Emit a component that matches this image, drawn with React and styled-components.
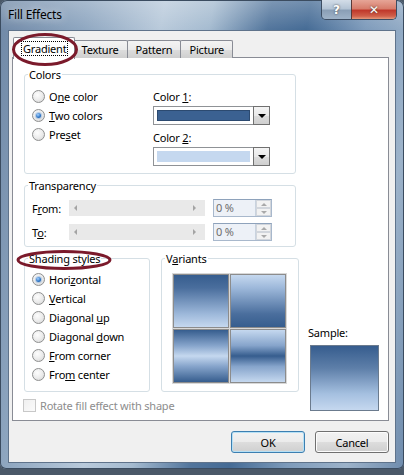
import React from "react";
import styled, { createGlobalStyle, css } from "styled-components";

const FONT = `"Noto Sans", "Open Sans", sans-serif`;
const DARK = "#365d8e";
const LIGHT = "#c5d8ef";

const Global = createGlobalStyle`
  html, body { margin: 0; padding: 0; }
  body {
    width: 404px; height: 475px; overflow: hidden;
    background: #4a5868;
    font-family: ${FONT};
    font-size: 11px;
    letter-spacing: -0.2px;
    color: #000;
  }
  * { box-sizing: border-box; }
`;

const Frame = styled.div`
  position: relative;
  width: 404px;
  height: 469px;
  padding: 0 8px 6px 8px;
  display: flex;
  flex-direction: column;
  border-radius: 7px 7px 6px 6px;
  background:
    linear-gradient(180deg, rgba(255,255,255,0.25) 0px, rgba(255,255,255,0) 30px),
    linear-gradient(100deg, #6f88a6 0%, #8ea6c0 18%, #b9cadb 34%, #a5bbd0 44%, #52759c 56%, #456b95 64%, #7e9bbb 76%, #9db3ca 88%, #6f8cad 100%);
  box-shadow: inset 0 0 0 1px #3b4c60;
`;

const TitleBar = styled.div`
  height: 30px;
  display: flex;
  align-items: flex-start;
  justify-content: space-between;
`;

const Title = styled.div`
  font-size: 12px;
  line-height: 30px;
  color: #000;
  text-shadow: 0 0 8px rgba(255,255,255,0.9);
`;

const Controls = styled.div`
  display: flex;
  margin-right: -1px;
  border: 1px solid #3c4d62;
  border-top: none;
  border-radius: 0 0 5px 5px;
  overflow: hidden;
`;

const CtrlBtn = styled.div`
  height: 19px;
  width: ${(p) => p.$w}px;
  display: flex;
  align-items: center;
  justify-content: center;
  color: #fff;
  font-weight: bold;
  font-size: 12px;
  font-family: "DejaVu Sans", sans-serif;
  text-shadow: 0 0 2px #333;
  ${(p) =>
    p.$close
      ? css`
          background: linear-gradient(180deg, #e6a597 0%, #d77d6c 45%, #c0392b 55%, #d0604a 85%, #e59a7c 100%);
          border-left: 1px solid #5a3a38;
        `
      : css`
          background: linear-gradient(180deg, #d3dde8 0%, #b4c4d5 45%, #8a9fb6 55%, #9fb3c8 100%);
        `}
`;

const Client = styled.div`
  position: relative;
  flex: 1;
  background: #f0f0f0;
  border: 1px solid #5f738b;
  display: flex;
  flex-direction: column;
`;

const TabStrip = styled.div`
  display: flex;
  align-items: flex-end;
  padding-left: 6px;
  margin-top: 6px;
  height: 21px;
  position: relative;
  z-index: 2;
`;

const Tab = styled.div`
  height: 18px;
  padding: 0 8px;
  display: flex;
  align-items: center;
  border: 1px solid #898c95;
  border-bottom: none;
  border-radius: 2px 2px 0 0;
  margin-left: -1px;
  background: linear-gradient(180deg, #f3f3f3 0%, #ebebeb 50%, #dddddd 51%, #cfcfcf 100%);
  ${(p) =>
    p.$active &&
    css`
      height: 22px;
      margin: 0 -2px -1px -2px;
      padding: 0 7px 1px 8px;
      background: #fff;
      position: relative;
      z-index: 3;
    `}
`;

const Focus = styled.span`
  outline: 1px dotted #000;
  outline-offset: 0;
  padding: 0 1px;
  line-height: 13px;
`;

const Panel = styled.div`
  margin: -1px 6px 0 3px;
  height: 364px;
  background: #fff;
  border: 1px solid #898c95;
  padding: 16px 0 0 11px;
  display: flex;
  flex-direction: column;
`;

const Group = styled.div`
  position: relative;
  width: ${(p) => p.$w}px;
  height: ${(p) => p.$h}px;
  border: 1px solid #d5dfe5;
  border-radius: 3px;
  margin-top: ${(p) => p.$mt || 0}px;
  flex-shrink: 0;
`;

const Legend = styled.div`
  position: absolute;
  top: -8px;
  left: 3px;
  padding: 0 1px;
  background: #fff;
  line-height: 15px;
`;

const Acc = styled.span`
  text-decoration: underline;
  text-underline-offset: 1px;
`;

const ColorsBody = styled.div`
  display: flex;
  padding: 12px 0 0 7px;
`;

const RadioCol = styled.div`
  width: 121px;
  display: flex;
  flex-direction: column;
`;

const RadioRow = styled.div`
  height: 19px;
  display: flex;
  align-items: center;
  gap: 4px;
`;

const RadioDot = styled.span`
  width: 13px;
  height: 13px;
  border-radius: 50%;
  border: 1px solid #8e8f8f;
  background: radial-gradient(circle at 40% 35%, #fdfdfd 0%, #ececec 50%, #d2d2d2 100%);
  display: flex;
  align-items: center;
  justify-content: center;
  flex-shrink: 0;
  &::after {
    content: "";
    display: ${(p) => (p.$on ? "block" : "none")};
    width: 5px;
    height: 5px;
    border-radius: 50%;
    background: radial-gradient(circle at 40% 35%, #a6d2ff 0%, #2a72c4 60%, #1b4f8e 100%);
    box-shadow: 0 0 1px 1px rgba(60, 120, 190, 0.35);
  }
`;

const ColorCol = styled.div`
  display: flex;
  flex-direction: column;
`;

const Label = styled.div`
  line-height: 19px;
  height: 19px;
  margin-top: ${(p) => p.$mt || 0}px;
`;

const Dropdown = styled.div`
  width: 117px;
  height: 19px;
  display: flex;
  align-items: stretch;
`;

const SwatchBox = styled.div`
  flex: 1;
  border: 1px solid #8f9296;
  border-right: none;
  background: #fff;
  padding: 3px;
  display: flex;
`;

const Swatch = styled.div`
  flex: 1;
  background: ${(p) => p.$c};
  border: 1px solid ${(p) => p.$b};
`;

const DropBtn = styled.div`
  width: 17px;
  border: 1px solid #707070;
  background: linear-gradient(180deg, #f4f4f4 0%, #e9e9e9 50%, #dcdcdc 51%, #cfcfcf 100%);
  display: flex;
  align-items: center;
  justify-content: center;
  &::after {
    content: "";
    border-left: 4px solid transparent;
    border-right: 4px solid transparent;
    border-top: 4px solid #000;
  }
`;

const TransBody = styled.div`
  display: flex;
  flex-direction: column;
  gap: 6px;
  padding: 13px 0 0 7px;
`;

const TransRow = styled.div`
  display: flex;
  align-items: center;
  height: 18px;
`;

const TransLabel = styled.div`
  width: 37px;
`;

const Slider = styled.div`
  width: 136px;
  height: 16px;
  background: #e9e9e9;
  display: flex;
  align-items: center;
  justify-content: space-between;
  padding: 0 9px 0 5px;
`;

const Tri = styled.span`
  width: 0;
  height: 0;
  border-top: 3px solid transparent;
  border-bottom: 3px solid transparent;
  ${(p) =>
    p.$dir === "left"
      ? css`border-right: 3px solid #a4a4a4;`
      : css`border-left: 3px solid #a4a4a4;`}
`;

const Spinner = styled.div`
  margin-left: 8px;
  width: 59px;
  height: 18px;
  display: flex;
  border: 1px solid #a8b8cc;
  border-top-color: #8ea2bb;
  background: #edf1f7;
`;

const SpinText = styled.div`
  flex: 1;
  color: #6d6d6d;
  line-height: 16px;
  padding-left: 2px;
`;

const SpinBtns = styled.div`
  width: 16px;
  display: flex;
  flex-direction: column;
  border-left: 1px solid #c9d3df;
  background: #f2f2f2;
`;

const SpinBtn = styled.div`
  flex: 1;
  display: flex;
  align-items: center;
  justify-content: center;
  border: 1px solid #d2d6dc;
  &::after {
    content: "";
    border-left: 3px solid transparent;
    border-right: 3px solid transparent;
    ${(p) =>
      p.$up
        ? css`border-bottom: 3px solid #a9a9a9;`
        : css`border-top: 3px solid #a9a9a9;`}
  }
`;

const Lower = styled.div`
  display: flex;
  margin-top: 11px;
`;

const LeftCol = styled.div`
  display: flex;
  flex-direction: column;
`;

const GroupsRow = styled.div`
  display: flex;
  gap: 11px;
`;

const ShadingBody = styled.div`
  display: flex;
  flex-direction: column;
  padding: 11px 0 0 7px;
`;

const TileGrid = styled.div`
  display: grid;
  grid-template-columns: 56px 56px;
  grid-auto-rows: 54px;
  gap: 1px 1px;
  padding: 15px 0 0 11px;
`;

const Tile = styled.div`
  border: 1px solid #8c8c8c;
  box-shadow: 0 0 0 1px #d8d8d8;
  background: ${(p) => p.$bg};
`;

const CheckRow = styled.div`
  display: flex;
  align-items: center;
  gap: 4px;
  margin: 6px 0 0 -1px;
  height: 14px;
  color: #8d8d8d;
`;

const CheckBox = styled.span`
  width: 13px;
  height: 13px;
  border: 1px solid #c8c8c8;
  background: linear-gradient(135deg, #f0f0f0, #fbfbfb);
`;

const SampleCol = styled.div`
  display: flex;
  flex-direction: column;
  margin: 67px 0 0 9px;
`;

const SampleLabel = styled.div`
  line-height: 15px;
  margin-bottom: 5px;
`;

const SampleBox = styled.div`
  width: 69px;
  height: 66px;
  margin-left: 2px;
  border: 1px solid #6b7b8e;
  background: linear-gradient(180deg, ${DARK} 0%, #5e7fa9 35%, #a5c0e0 75%, ${LIGHT} 100%);
`;

const ButtonRow = styled.div`
  display: flex;
  justify-content: flex-end;
  gap: 10px;
  padding-right: 6px;
  margin-top: 10px;
`;

const Button = styled.div`
  width: 74px;
  height: 22px;
  display: flex;
  align-items: center;
  justify-content: center;
  border-radius: 3px;
  border: 1px solid ${(p) => (p.$def ? "#3c7fb1" : "#707070")};
  background: linear-gradient(180deg, #f2f2f2 0%, #ebebeb 50%, #dddddd 51%, #cfcfcf 100%);
  box-shadow: inset 0 0 0 1px ${(p) => (p.$def ? "#b6e0f5" : "#fcfcfc")};
`;

const Marks = styled.svg`
  position: absolute;
  left: 0;
  top: 0;
  pointer-events: none;
  z-index: 10;
`;

const tileBgs = [
  `linear-gradient(180deg, ${DARK} 0%, #4a6e9d 25%, #9db8da 75%, ${LIGHT} 100%)`,
  `linear-gradient(180deg, ${LIGHT} 0%, #9db8da 25%, #4a6e9d 75%, ${DARK} 100%)`,
  `linear-gradient(180deg, ${DARK} 0%, #86a4cb 30%, ${LIGHT} 50%, #86a4cb 70%, ${DARK} 100%)`,
  `linear-gradient(180deg, ${LIGHT} 0%, #86a4cb 30%, ${DARK} 50%, #86a4cb 70%, ${LIGHT} 100%)`,
];

function Radio({ on, children }) {
  return (
    <RadioRow>
      <RadioDot $on={on} />
      <span>{children}</span>
    </RadioRow>
  );
}

function TransLine({ label }) {
  return (
    <TransRow>
      <TransLabel>{label}</TransLabel>
      <Slider>
        <Tri $dir="left" />
        <Tri $dir="right" />
      </Slider>
      <Spinner>
        <SpinText>0 %</SpinText>
        <SpinBtns>
          <SpinBtn $up />
          <SpinBtn />
        </SpinBtns>
      </Spinner>
    </TransRow>
  );
}

export default function App() {
  return (
    <>
      <Global />
      <Frame>
        <TitleBar>
          <Title>Fill Effects</Title>
          <Controls>
            <CtrlBtn $w={29}>?</CtrlBtn>
            <CtrlBtn $w={45} $close>
              ✕
            </CtrlBtn>
          </Controls>
        </TitleBar>
        <Client>
          <TabStrip>
            <Tab $active>
              <Focus>Gradient</Focus>
            </Tab>
            <Tab>Texture</Tab>
            <Tab>Pattern</Tab>
            <Tab>Picture</Tab>
          </TabStrip>
          <Panel>
            <Group $w={272} $h={100}>
              <Legend>Colors</Legend>
              <ColorsBody>
                <RadioCol>
                  <Radio>
                    O<Acc>n</Acc>e color
                  </Radio>
                  <Radio on>
                    <Acc>T</Acc>wo colors
                  </Radio>
                  <Radio>
                    Pre<Acc>s</Acc>et
                  </Radio>
                </RadioCol>
                <ColorCol>
                  <Label>
                    Color <Acc>1</Acc>:
                  </Label>
                  <Dropdown>
                    <SwatchBox>
                      <Swatch $c="#3b6191" $b="#2c4a70" />
                    </SwatchBox>
                    <DropBtn />
                  </Dropdown>
                  <Label $mt={3}>
                    Color <Acc>2</Acc>:
                  </Label>
                  <Dropdown>
                    <SwatchBox>
                      <Swatch $c="#c5d8ef" $b="#c5d8ef" />
                    </SwatchBox>
                    <DropBtn />
                  </Dropdown>
                </ColorCol>
              </ColorsBody>
            </Group>
            <Group $w={272} $h={62} $mt={11}>
              <Legend>Transparency</Legend>
              <TransBody>
                <TransLine
                  label={
                    <>
                      F<Acc>r</Acc>om:
                    </>
                  }
                />
                <TransLine
                  label={
                    <>
                      T<Acc>o</Acc>:
                    </>
                  }
                />
              </TransBody>
            </Group>
            <Lower>
              <LeftCol>
                <GroupsRow>
                  <Group $w={126} $h={134}>
                    <Legend>Shading styles</Legend>
                    <ShadingBody>
                      <Radio on>
                        Hori<Acc>z</Acc>ontal
                      </Radio>
                      <Radio>
                        <Acc>V</Acc>ertical
                      </Radio>
                      <Radio>
                        Diagonal <Acc>u</Acc>p
                      </Radio>
                      <Radio>
                        Diagonal <Acc>d</Acc>own
                      </Radio>
                      <Radio>
                        <Acc>F</Acc>rom corner
                      </Radio>
                      <Radio>
                        Fro<Acc>m</Acc> center
                      </Radio>
                    </ShadingBody>
                  </Group>
                  <Group $w={138} $h={134}>
                    <Legend>
                      V<Acc>a</Acc>riants
                    </Legend>
                    <TileGrid>
                      {tileBgs.map((bg, i) => (
                        <Tile key={i} $bg={bg} />
                      ))}
                    </TileGrid>
                  </Group>
                </GroupsRow>
                <CheckRow>
                  <CheckBox />
                  <span>Rotate fill effect with shape</span>
                </CheckRow>
              </LeftCol>
              <SampleCol>
                <SampleLabel>Sample:</SampleLabel>
                <SampleBox />
              </SampleCol>
            </Lower>
          </Panel>
          <ButtonRow>
            <Button $def>OK</Button>
            <Button>Cancel</Button>
          </ButtonRow>
        </Client>
        <Marks width="404" height="475" viewBox="0 0 404 475">
          <ellipse cx="45" cy="49.5" rx="31.5" ry="15" fill="none" stroke="#7b1a2b" strokeWidth="3" />
          <ellipse cx="64" cy="260" rx="46" ry="8.5" fill="none" stroke="#7b1a2b" strokeWidth="3" />
        </Marks>
      </Frame>
    </>
  );
}
